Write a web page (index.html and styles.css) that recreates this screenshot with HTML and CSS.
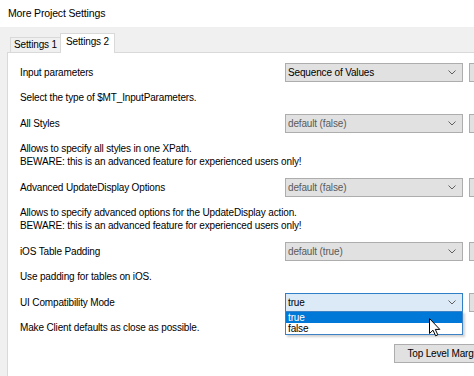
FILE: index.html
```html
<!DOCTYPE html>
<html lang="en">

<head>
    <meta charset="UTF-8">
    <meta name="viewport" content="width=device-width, initial-scale=1.0">
    <title>More Project Settings</title>
    <link rel="stylesheet" href="styles.css">
</head>

<body>
    <div class="window">
        <div class="titlebar">More Project Settings</div>

        <div class="tabstrip">
            <div class="tab">Settings 1</div>
            <div class="tab active">Settings 2</div>
        </div>

        <div class="panel">
            <div class="setting">
                <div class="row">
                    <span class="label">Input parameters</span>
                    <div class="combo">
                        <span class="combo-value">Sequence of Values</span>
                        <svg class="chevron" width="8" height="5" viewBox="0 0 8 5"><path d="M0.5 0.5 L4 4 L7.5 0.5" fill="none" stroke="#606060" stroke-width="1"/></svg>
                    </div>
                    <button class="side-button"></button>
                </div>
                <p class="desc">Select the type of $MT_InputParameters.</p>
            </div>

            <div class="setting">
                <div class="row">
                    <span class="label">All Styles</span>
                    <div class="combo">
                        <span class="combo-value dim">default (false)</span>
                        <svg class="chevron" width="8" height="5" viewBox="0 0 8 5"><path d="M0.5 0.5 L4 4 L7.5 0.5" fill="none" stroke="#606060" stroke-width="1"/></svg>
                    </div>
                    <button class="side-button"></button>
                </div>
                <p class="desc">Allows to specify all styles in one XPath.<br>BEWARE: this is an advanced feature for experienced users only!</p>
            </div>

            <div class="setting">
                <div class="row">
                    <span class="label">Advanced UpdateDisplay Options</span>
                    <div class="combo">
                        <span class="combo-value dim">default (false)</span>
                        <svg class="chevron" width="8" height="5" viewBox="0 0 8 5"><path d="M0.5 0.5 L4 4 L7.5 0.5" fill="none" stroke="#606060" stroke-width="1"/></svg>
                    </div>
                    <button class="side-button"></button>
                </div>
                <p class="desc">Allows to specify advanced options for the UpdateDisplay action.<br>BEWARE: this is an advanced feature for experienced users only!</p>
            </div>

            <div class="setting">
                <div class="row">
                    <span class="label">iOS Table Padding</span>
                    <div class="combo">
                        <span class="combo-value dim">default (true)</span>
                        <svg class="chevron" width="8" height="5" viewBox="0 0 8 5"><path d="M0.5 0.5 L4 4 L7.5 0.5" fill="none" stroke="#606060" stroke-width="1"/></svg>
                    </div>
                    <button class="side-button"></button>
                </div>
                <p class="desc">Use padding for tables on iOS.</p>
            </div>

            <div class="setting">
                <div class="row">
                    <span class="label">UI Compatibility Mode</span>
                    <div class="combo open">
                        <span class="combo-value">true</span>
                        <svg class="chevron" width="8" height="5" viewBox="0 0 8 5"><path d="M0.5 0.5 L4 4 L7.5 0.5" fill="none" stroke="#606060" stroke-width="1"/></svg>
                        <ul class="combo-list">
                            <li class="selected">true</li>
                            <li>false</li>
                        </ul>
                    </div>
                    <button class="side-button"></button>
                </div>
                <p class="desc">Make Client defaults as close as possible.</p>
            </div>

            <div class="actions">
                <button class="button">Top Level Margins</button>
            </div>
        </div>

        <!-- mouse pointer over the open list -->
        <svg class="cursor" width="12" height="19" viewBox="0 0 12 19">
            <path d="M0.5 0.5 L0.5 15.5 L4 12.2 L6.6 17.8 L8.8 16.8 L6.3 11.4 L10.8 11.4 Z" fill="#fff" stroke="#000" stroke-width="1" stroke-linejoin="round"/>
        </svg>
    </div>
</body>

</html>
```

FILE: styles.css
```css
/* Reset and base styles */
* {
    box-sizing: border-box;
    margin: 0;
    padding: 0;
}

html,
body {
    height: 100%;
    overflow: hidden;
}

body {
    font-family: "Liberation Sans", Arial, sans-serif;
    font-size: 10px;
    letter-spacing: -0.15px;
    color: #000;
    background-color: #fff;
}

/* Window */
.window {
    position: relative;
    display: flex;
    flex-direction: column;
    width: 520px;
    height: 100%;
    background-color: #f0f0f0;
}

.titlebar {
    height: 27px;
    line-height: 27px;
    padding-left: 8px;
    font-size: 10.5px;
    background-color: #fff;
}

/* Tabs */
.tabstrip {
    display: flex;
    align-items: flex-end;
    height: 25px;
    padding-left: 10px;
}

.tab {
    width: 50px;
    height: 15px;
    line-height: 14px;
    text-align: center;
    border: 1px solid #d9d9d9;
    border-right: none;
    border-bottom: none;
    background-color: #f0f0f0;
}

.tab.active {
    position: relative;
    z-index: 2;
    width: 55px;
    height: 20px;
    line-height: 16px;
    margin-bottom: -1px;
    border-right: 1px solid #d9d9d9;
    background-color: #fff;
}

/* Panel */
.panel {
    position: relative;
    flex: 1;
    width: 507px;
    margin-left: 7px;
    padding: 10px 12px 0 12px;
    border-top: 1px solid #d9d9d9;
    border-left: 1px solid #d9d9d9;
    background-color: #fff;
}

.setting {
    margin-bottom: 10.5px;
}

.row {
    display: flex;
    align-items: center;
    height: 19px;
}

.label {
    flex: 1;
}

.desc {
    margin-top: 8.5px;
    line-height: 13px;
}

/* Combo box */
.combo {
    position: relative;
    display: flex;
    align-items: center;
    width: 178px;
    height: 19px;
    margin-right: 6px;
    padding: 0 6px 0 2px;
    border: 1px solid #adadad;
    background-color: #e1e1e1;
}

.combo-value {
    flex: 1;
}

.combo-value.dim {
    color: #5a5a5a;
}

.chevron {
    display: block;
}

.combo.open {
    border-color: #2f7fc7;
    background-color: #dceaf8;
}

.combo-list {
    position: absolute;
    top: 17px;
    left: -1px;
    width: 178px;
    list-style: none;
    border: 1px solid #3c82c4;
    background-color: #fff;
    box-shadow: 2px 2px 2px rgba(0, 0, 0, 0.18);
    z-index: 5;
}

.combo-list li {
    height: 11px;
    line-height: 11px;
    padding-left: 2px;
}

.combo-list li.selected {
    background-color: #0078d7;
    color: #fff;
}

/* Buttons */
.side-button {
    width: 33px;
    height: 19px;
    border: 1px solid #adadad;
    background-color: #e1e1e1;
}

.actions {
    display: flex;
    justify-content: flex-end;
    margin-top: 2px;
}

.button {
    height: 19px;
    padding: 0 15px 0 12px;
    font-family: inherit;
    font-size: 10px;
    letter-spacing: -0.15px;
    color: #000;
    border: 1px solid #adadad;
    background-color: #e1e1e1;
}

/* Pointer */
.cursor {
    position: absolute;
    left: 429px;
    top: 318px;
    z-index: 10;
}
```
